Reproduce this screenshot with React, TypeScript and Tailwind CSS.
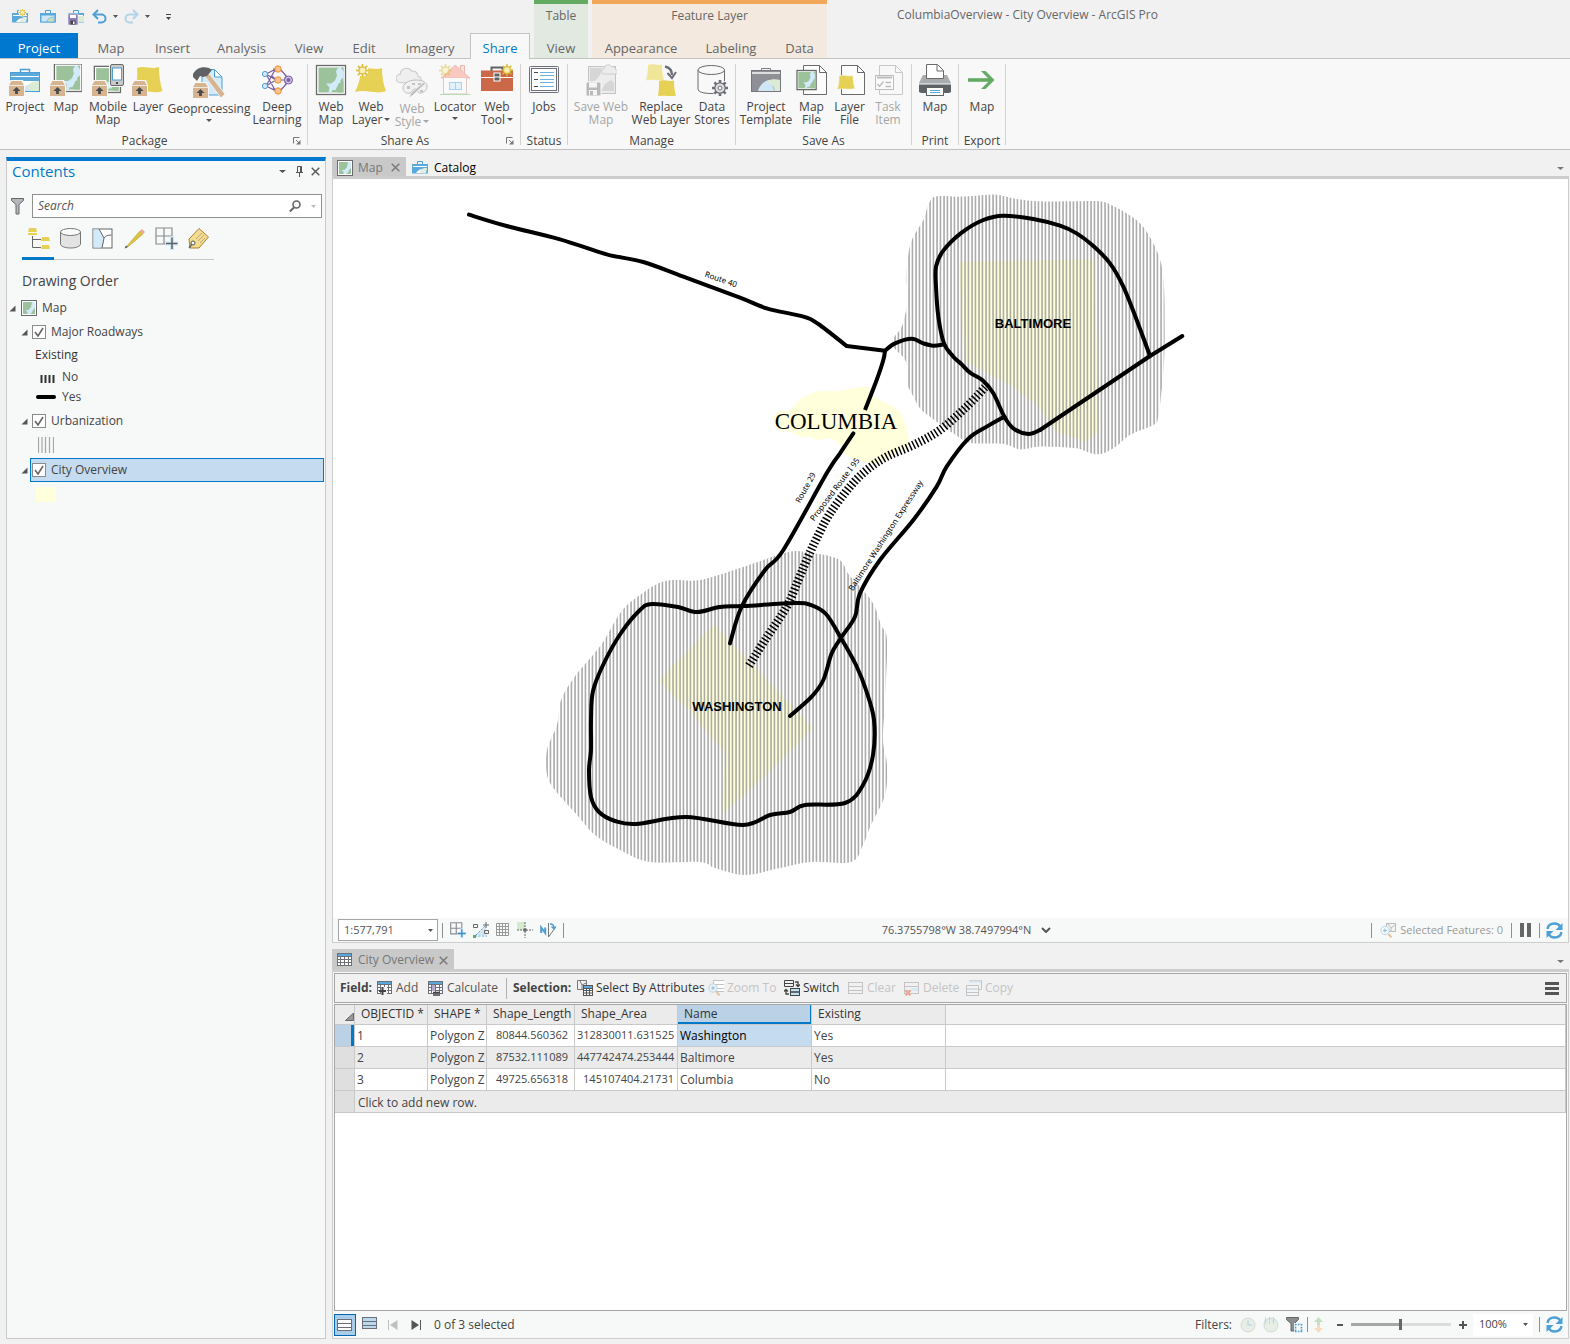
import React from "react";
import type { ReactNode } from "react";

type P = [number, number];

/* ---------- geometry helpers ---------- */

function smooth(pts: P[], closed = false): string {
  const n = pts.length;
  const at = (i: number): P =>
    closed ? pts[(i + n) % n] : pts[Math.max(0, Math.min(n - 1, i))];
  let d = `M${pts[0][0]} ${pts[0][1]}`;
  const last = closed ? n : n - 1;
  for (let i = 0; i < last; i++) {
    const [a, b, c, e] = [at(i - 1), at(i), at(i + 1), at(i + 2)];
    d += `C${b[0] + (c[0] - a[0]) / 6} ${b[1] + (c[1] - a[1]) / 6} ${c[0] - (e[0] - b[0]) / 6} ${c[1] - (e[1] - b[1]) / 6} ${c[0]} ${c[1]}`;
  }
  return closed ? d + "Z" : d;
}

/* ---------- icons ---------- */

function Svg({ s = 32, w, children }: { s?: number; w?: number; children: ReactNode }) {
  return (
    <svg width={w ?? s} height={s} viewBox={`0 0 ${w ?? s} ${s}`} fill="none" className="shrink-0" aria-hidden="true">
      {children}
    </svg>
  );
}

const Sun = ({ x, y, k = 1 }: { x: number; y: number; k?: number }) => (
  <g transform={`translate(${x} ${y}) scale(${k})`}>
    <path d="M0-6.500V6.500M-6.500 0H6.500M-4.600-4.600L4.600 4.600M4.600-4.600L-4.600 4.600" stroke="#d9bb3a" strokeWidth="1.500" />
    <circle r="3.600" fill="#f8efb0" stroke="#d9bb3a" strokeWidth="1.200" />
  </g>
);

const Box = () => (
  <g>
    <path d="M1.500 16h12.500l2 5V32.500H-1V21z" fill="#f8f8f8" />
    <path d="M2.500 17h10l2.500 4.200H0z" fill="#d6b48f" />
    <rect x="0" y="22" width="15" height="10" fill="#d6b48f" />
    <path d="M7.500 23l-4 4h2.600v3h2.800v-3h2.600z" fill="#4a4a4a" />
  </g>
);

const MapTile = ({ x = 0, y = 0, k = 1 }: { x?: number; y?: number; k?: number }) => (
  <g transform={`translate(${x} ${y}) scale(${k})`}>
    <rect x="1.500" y="1.500" width="29" height="29" fill="#fff" stroke="#6a6a6a" strokeWidth={1.3 / k} />
    <rect x="3.500" y="3.500" width="25" height="25" fill="#9bc29b" />
    <path d="M23 3.500h5.500v10l-3 2.500v5l-3 1-2 4h-3l-1 2.500h-3l1-5-3.500-4h5l4-3 2-5-1-4z" fill="#d3eaf9" />
    <path d="M26 3.500l2.500 4v-4zM23 20l5.500-3v11.500h-6z" fill="#9bc29b" />
  </g>
);

const IProject = () => (
  <Svg>
    <path d="M11.500 8V5.500h9V8" stroke="#4d9fd6" strokeWidth="1.400" />
    <rect x="1.500" y="8.500" width="29" height="19" fill="#fff" stroke="#4d9fd6" />
    <rect x="2" y="9" width="28" height="8" fill="#5aa9dd" />
    <path d="M2 12.500h28" stroke="#fff" />
    <path d="M17 27c0-6 5-10 13-10v10z" fill="#dcebd6" />
    <path d="M12 27c2-3 5-6 9-7l-3 3 3 4z" fill="#cfe6f7" />
    <Box />
  </Svg>
);

const IMap = () => (
  <Svg>
    <MapTile x={3} y={-1.500} k={0.95} />
    <Box />
  </Svg>
);

const IMobile = () => (
  <Svg>
    <MapTile x={1} y={1} k={0.9} />
    <rect x="17" y="0" width="15" height="23" fill="#f8f8f8" />
    <rect x="18.500" y=".5" width="13" height="21" rx="1.500" fill="#c9c9c9" stroke="#6a6a6a" />
    <rect x="20.500" y="4" width="9" height="12" fill="#fff" stroke="#4d9fd6" />
    <rect x="24" y="18" width="2" height="2" fill="#4a4a4a" />
    <Box />
  </Svg>
);

const ILayer = () => (
  <Svg>
    <path d="M5 4c8-3 14 2 22-1 0 8 1 16 3.500 24-9 4-18-3-29 1C5 20 6 12 5 4z" fill="#e6d155" />
    <Box />
  </Svg>
);

const IGeo = () => (
  <Svg>
    <path d="M9 3.500h12l8 8V29H9z" fill="#d3eaf9" stroke="#4d9fd6" />
    <path d="M21.500 3.500v7.500H29z" fill="#fff" stroke="#4d9fd6" />
    <path d="M11 9l4-3 17 22-4 4z" fill="#d6b48f" stroke="#f8f8f8" strokeWidth=".8" />
    <path d="M0 8c3-5 8-8 16-6l3 2-5 6-4 1-3-1-3 5-4-4z" fill="#5f6265" />
    <Box />
  </Svg>
);

const IDeep = () => (
  <Svg>
    <path d="M5 10l10-5M5 10l10 6M5 10l9 16M5 22l10-6M5 22l10 5M5 22L14 6M19 5l8 9M19 16h8M19 27l8-9M12 5h3v3M11 12l3 3M12 24l3 2M24 11l2 3-3 0M24 21l2-3-3 0" stroke="#7b5fa3" strokeWidth="1.200" />
    <circle cx="4" cy="10" r="2.600" fill="#d3eaf9" stroke="#4d9fd6" />
    <circle cx="4" cy="22" r="2.600" fill="#d3eaf9" stroke="#4d9fd6" />
    <circle cx="17" cy="5" r="3.200" fill="#f8c48c" stroke="#ef9235" />
    <circle cx="17" cy="16" r="3.200" fill="#f8c48c" stroke="#ef9235" />
    <circle cx="17" cy="27" r="3.200" fill="#f8c48c" stroke="#ef9235" />
    <circle cx="27.500" cy="16" r="4" fill="#cdbfe0" stroke="#7b5fa3" />
    <circle cx="27.500" cy="16" r="2" fill="#7b5fa3" />
  </Svg>
);

const IWebMap = () => (
  <Svg>
    <MapTile />
  </Svg>
);

const IWebLayer = () => (
  <Svg>
    <path d="M5 5c8-3 14 2 22-1 0 8 1 16 4 23-10 4-19-2-31 1C4 20 6 12 5 5z" fill="#e6d155" />
    <circle cx="7.500" cy="6.500" r="6" fill="#f8f8f8" />
    <Sun x={7.5} y={6.5} />
  </Svg>
);

const cloud = "M4 14a4 4 0 0 1 0-8 6 6 0 0 1 11-3 5 5 0 0 1 6 5 3 3 0 0 1 0 6z";

const IWebStyle = () => (
  <Svg>
    <path d={cloud} transform="translate(0 2) scale(1.050)" fill="#efefef" stroke="#c8c8c8" />
    <path d="M20 14c-8 0-13 4-13 8s4 6 7 5 2-4 5-4 2 5 6 4 6-3 6-7-5-6-11-6z" fill="#f1f1f1" stroke="#bdbdbd" />
    <path d="M11 20h3v3h-3zM16 17h3v2h-3zM22 17h3v2h-3zM24 24h3v2h-3z" fill="#c4c4c4" />
    <path d="M30 17L17 29l-4 3 2-5 13-11z" fill="#bdbdbd" stroke="#f8f8f8" strokeWidth=".6" />
  </Svg>
);

const ILocator = () => (
  <Svg>
    <path d="M21.500 9V1.500h4V12" fill="#fbe0da" stroke="#eab5ab" />
    <path d="M2 14L16 1l15 13z" fill="#f7c9c0" stroke="#f0bfb5" />
    <path d="M4.500 14v16h23V14" fill="#fafafa" stroke="#dfc9c4" />
    <rect x="10.500" y="18.500" width="12" height="7" fill="#e3f1fb" stroke="#a9d0ec" />
    <path d="M16.500 18.500v7" stroke="#a9d0ec" />
    <path d="M1 30.500h30.500" stroke="#b6dcb4" />
    <g opacity=".5">
      <Sun x={6.5} y={6.5} />
    </g>
  </Svg>
);

const IWebTool = () => (
  <Svg>
    <path d="M10.500 8V3.500h11V8" stroke="#5f6265" strokeWidth="2" />
    <rect x="0" y="6.500" width="32" height="20.500" fill="#cb6848" />
    <path d="M0 13.500h32" stroke="#fff" />
    <rect x="13" y="9" width="6" height="8" fill="#5f6265" stroke="#fff" />
    <path d="M13 13h6" stroke="#fff" />
    <Sun x={26} y={6} k={0.95} />
  </Svg>
);

const IJobs = () => (
  <Svg>
    <rect x="1.500" y="2.500" width="29" height="26" rx="1" fill="#f8f8f8" stroke="#6d6f78" />
    <rect x="3.500" y="4.500" width="25" height="22" fill="#fff" stroke="#6d6f78" />
    <path d="M6 8.500h4M6 15.500h4M6 22.500h4" stroke="#4a4a4a" />
    <path d="M12 8.500h14M12 11.500h14M12 15.500h14M12 18.500h14M12 22.500h14" stroke="#6fb2e2" />
  </Svg>
);

const ISaveWeb = () => (
  <Svg>
    <rect x="3.500" y="2.500" width="27" height="27" fill="#ececec" stroke="#c4c4c4" />
    <path d="M5 4h12l-2 7-5 6-5 1zM20 20l6-4 3 3v8H16z" fill="#d6d6d6" />
    <path d={cloud} transform="translate(16.500 .5) scale(.68)" fill="#ececec" stroke="#c0c0c0" />
    <rect x="1" y="18" width="15" height="14" fill="#b9b9b9" stroke="#f8f8f8" />
    <rect x="4" y="18.500" width="8" height="5" fill="#f5f5f5" />
    <rect x="4" y="26" width="8" height="5" fill="#f5f5f5" />
    <rect x="5" y="27" width="3" height="4" fill="#b9b9b9" />
  </Svg>
);

const IReplace = () => (
  <Svg>
    <path d="M3 1c5-2 9 1 14-.5 0 6 .5 11 2 15-6 2-12-1-18 1C2.500 11 3 6 3 1z" fill="#f0e69a" />
    <path d="M14 17c5-2 9 1 15-.5 0 6 .5 10 2 15-6 2-12-1-18 1 1-5 1-10 1-15.500z" fill="#e6d155" />
    <path d="M20 2.500c4 1 7 4 7 8.500" stroke="#6d6f78" strokeWidth="2.400" />
    <path d="M22.500 9l4.500 5 4-6" stroke="#6d6f78" strokeWidth="2" />
  </Svg>
);

const IStores = () => (
  <Svg>
    <path d="M2 6v19c0 3 6 4.500 13 4.500S28.500 28 28.500 25V6" fill="#f8f8f8" stroke="#6a6a6a" />
    <ellipse cx="15.250" cy="6" rx="13.300" ry="4.500" fill="#f8f8f8" stroke="#6a6a6a" />
    <circle cx="24" cy="24" r="8.500" fill="#f8f8f8" />
    <g transform="translate(24 24)">
      <path d="M0-8V8M-8 0H8M-5.600-5.600L5.600 5.600M5.600-5.600L-5.600 5.600" stroke="#6d6f78" strokeWidth="2.600" />
      <circle r="5.200" fill="#e0e0e0" stroke="#6d6f78" strokeWidth="1.300" />
      <circle r="2" fill="#f8f8f8" stroke="#6d6f78" />
    </g>
  </Svg>
);

const ITemplate = () => (
  <Svg>
    <path d="M11.500 7V4.500h9V7" stroke="#7b7b80" />
    <rect x="1.500" y="6.500" width="29" height="21" fill="#8f9096" stroke="#77787d" />
    <path d="M2 9h28" stroke="#f8f8f8" strokeWidth="1.500" />
    <path d="M8 27c2-7 7-10 11-11 4 3 3 7 6 11z" fill="#cfe6f7" />
    <path d="M17 17c4-2 9-2 13-1v11h-5c-1-4-3-7-8-10z" fill="#dcebd6" />
  </Svg>
);

const doc = "M7.500 1.500h16l7 7v22h-23z";
const fold = "M23.500 1.500v7h7";

const IMapFile = () => (
  <Svg>
    <path d={doc} fill="#fcfcfc" stroke="#6a6a6a" />
    <path d={fold} stroke="#6a6a6a" />
    <MapTile x={0} y={5.5} k={0.66} />
  </Svg>
);

const ILayerFile = () => (
  <Svg>
    <path d={doc} fill="#fcfcfc" stroke="#6a6a6a" />
    <path d={fold} stroke="#6a6a6a" />
    <path d="M5 12c5-2 9 1 14-.5 0 5 .5 9 2 13-6 2-12-1-18 1 2-4 2-8 2-13.500z" fill="#e6d155" stroke="#f8f8f8" strokeWidth=".5" />
  </Svg>
);

const ITask = () => (
  <Svg>
    <path d={doc} fill="#f8f8f8" stroke="#c8c8c8" />
    <path d={fold} stroke="#c8c8c8" />
    <rect x="3.500" y="11.500" width="18" height="14" fill="#fafafa" stroke="#bdbdbd" />
    <path d="M5 13.500h15" stroke="#bdbdbd" strokeWidth="2" />
    <path d="M5.500 20l2 2.500 4-5M13.500 18.500h5.500M13.500 22.500h5.500" stroke="#bdbdbd" strokeWidth="1.400" />
  </Svg>
);

const IPrint = () => (
  <Svg>
    <path d="M4 11h24l4 8v9H0v-9z" fill="#a9abaf" />
    <path d="M0 20h32v8l-2 1H2l-2-1z" fill="#5f6265" />
    <path d="M0 20h32" stroke="#f8f8f8" />
    <path d="M7.500.5h11l6 6v8h-17z" fill="#fff" stroke="#6a6a6a" />
    <path d="M18 .5v6.500h6.500" stroke="#6a6a6a" />
    <rect x="7.500" y="23.500" width="17" height="8" fill="#fff" stroke="#5f6265" />
    <path d="M11 26.500h10M11 28.500h10" stroke="#5aa9dd" />
  </Svg>
);

const IExport = () => (
  <Svg>
    <path d="M2 16h24" stroke="#63aa63" strokeWidth="3.600" />
    <path d="M15 7h4.500l9 9-9 9H15l9-9z" fill="#63aa63" />
  </Svg>
);

const SmallCase = ({ children }: { children?: ReactNode }) => (
  <Svg s={16}>
    <path d="M5.500 4V1.500h5V4" stroke="#4d9fd6" />
    <path d="M0 4h16v9.500H0z" fill="#5aa9dd" />
    <path d="M1 6.500h14" stroke="#fff" />
    <path d="M7 13c0-3 3-5 8-5l-1 5z" fill="#e3efdc" />
    <path d="M4 13c1-2 3-3 5-4l-1 4z" fill="#fff" />
    {children}
  </Svg>
);

const Caret = ({ c = "#555", w = 5 }: { c?: string; w?: number }) => (
  <svg width={w} height="3" viewBox="0 0 6 3" preserveAspectRatio="none" className="shrink-0" aria-hidden="true">
    <path d="M0 0h6L3 3z" fill={c} />
  </svg>
);

const SmallMap = () => (
  <svg width="16" height="16" viewBox="0 0 32 32" fill="none" className="shrink-0" aria-hidden="true">
    <rect x="1" y="1" width="30" height="30" fill="#fff" stroke="#6a6a6a" strokeWidth="2" />
    <rect x="4" y="4" width="24" height="24" fill="#9bc29b" />
    <path d="M22 4h6v12l-4 4-2 5-4 3h-5v-4l-4-4h6l5-6z" fill="#d3eaf9" />
  </svg>
);

const XIcon = ({ c = "#777" }: { c?: string }) => (
  <Svg s={9}>
    <path d="M.7.7l7.600 7.600M8.300.7L.7 8.300" stroke={c} strokeWidth="1.400" />
  </Svg>
);

const TableGlyph = ({ children }: { children?: ReactNode }) => (
  <Svg s={16}>
    <rect x=".5" y="1.500" width="14" height="12" fill="#fff" stroke="#6d6f78" />
    <rect x="1" y="2" width="13" height="2" fill="#5aa9dd" />
    <path d="M0 4.500h15M0 7.500h15M0 10.500h15M3.500 4v9.500M7.500 4v9.500M11.500 4v9.500" stroke="#6d6f78" />
    {children}
  </Svg>
);

const Refresh = () => (
  <Svg s={17}>
    <path d="M1.500 7C2 3.500 5 1.500 8.500 1.500c2.500 0 4.500 1 5.500 3" stroke="#4d9fd6" strokeWidth="2.400" />
    <path d="M16.500 1v7h-7z" fill="#4d9fd6" />
    <path d="M15.500 10c-.5 3.500-3.500 5.500-7 5.500-2.500 0-4.500-1-5.500-3" stroke="#4d9fd6" strokeWidth="2.400" />
    <path d="M.5 16V9h7z" fill="#4d9fd6" />
  </Svg>
);

const GridPlus = ({ s = 16 }: { s?: number }) => (
  <svg width={s} height={s} viewBox="0 0 23 23" fill="none" className="shrink-0" aria-hidden="true">
    <path d="M1 1h16v16H1zM9 1v16M1 9h16" stroke="#8a8a8e" strokeWidth={s > 16 ? 1.2 : 1.6} />
    <path d="M17 9v14M10 16.500h13" stroke="#cfe8f9" strokeWidth="4" />
    <path d="M17 10.500v11.500M11 16.500h11.500" stroke={s > 16 ? "#5f6265" : "#3d8fc9"} strokeWidth={s > 16 ? 1.5 : 2} />
  </svg>
);

/* ---------- title bar and ribbon tabs ---------- */

const mainTabs: [string, string][] = [
  ["Map", "ml-0.5 w-[62px]"],
  ["Insert", "w-[61px]"],
  ["Analysis", "w-[77px]"],
  ["View", "w-[58px]"],
  ["Edit", "w-[52px]"],
  ["Imagery", "w-[80px]"],
];

function Tab({ label, width }: { label: string; width: string }) {
  return <button className={`${width} h-[25px] pt-1 text-center text-[13px] leading-5 whitespace-nowrap text-[#666]`}>{label}</button>;
}

function Header() {
  return (
    <header className="flex h-[59px] shrink-0 border-b border-[#c3c3c3]">
      <div className="flex w-[530px] shrink-0 flex-col justify-between">
        <div className="flex h-[33px] items-center pl-3">
          <button aria-label="New project" className="mr-3">
            <SmallCase>
              <circle cx="10.500" cy="3.500" r="4" fill="#f1f1f1" />
              <Sun x={10.5} y={3.5} k={0.6} />
            </SmallCase>
          </button>
          <button aria-label="Open project" className="mr-3">
            <SmallCase>
              <path d="M1 6h14v7H1z" fill="#cfe6f7" stroke="#5aa9dd" />
              <path d="M7 13c0-3 3-5 8-5l-2 5z" fill="#c9dfbd" stroke="#5aa9dd" strokeWidth=".6" />
            </SmallCase>
          </button>
          <button aria-label="Save project" className="mr-2">
            <SmallCase>
              <path d="M6 7h10v6H6z" fill="#dcebd6" />
              <rect x="0" y="5" width="10" height="11" fill="#8f7bb8" stroke="#f1f1f1" strokeWidth=".6" />
              <rect x="2" y="6" width="6" height="3" fill="#fff" />
              <rect x="2.500" y="11.500" width="5" height="4" fill="#444" />
              <rect x="5" y="12.500" width="1.500" height="2.500" fill="#fff" />
            </SmallCase>
          </button>
          <button aria-label="Undo" className="flex items-center gap-1.5">
            <Svg s={15}>
              <path d="M1.500 5.500h8a4 4 0 0 1 0 8H6" stroke="#4d9fd6" strokeWidth="2" />
              <path d="M6 1L1.500 5.500 6 10" stroke="#4d9fd6" strokeWidth="2" />
            </Svg>
            <Caret />
          </button>
          <button aria-label="Redo" className="ml-1.5 flex items-center gap-1.5">
            <Svg s={15}>
              <path d="M13.500 5.500h-8a4 4 0 0 0 0 8H9" stroke="#b3d3ea" strokeWidth="2" />
              <path d="M9 1l4.500 4.500L9 10" stroke="#b3d3ea" strokeWidth="2" />
            </Svg>
            <Caret />
          </button>
          <button aria-label="Customize quick access toolbar" className="ml-4 flex flex-col items-center gap-0.5">
            <span className="h-px w-[5px] bg-[#444]" />
            <Caret c="#444" />
          </button>
        </div>
        <nav className="flex">
          <button className="h-[25px] w-[78px] bg-[#0078d0] pt-1 text-[13px] leading-5 text-white">Project</button>
          {mainTabs.map(([l, w]) => (
            <Tab key={l} label={l} width={w} />
          ))}
          <button className="-mb-px h-[26px] w-[60px] border border-b-0 border-[#c3c3c3] bg-[#f8f8f8] pt-[3px] text-[13px] leading-5 text-[#0079c9]">
            Share
          </button>
        </nav>
      </div>
      <div className="ml-1 flex w-[54px] shrink-0 flex-col items-center justify-between border-t-4 border-[#63aa63] bg-[#e2e9e0]">
        <span className="pt-1 text-[12px] leading-4 text-[#666]">Table</span>
        <Tab label="View" width="w-[54px]" />
      </div>
      <div className="ml-1 flex w-[235px] shrink-0 flex-col items-center justify-between border-t-4 border-[#f0a858] bg-[#f3e9de]">
        <span className="pt-1 text-[12px] leading-4 text-[#666]">Feature Layer</span>
        <div className="flex">
          <Tab label="Appearance" width="w-[98px]" />
          <Tab label="Labeling" width="w-[82px]" />
          <Tab label="Data" width="w-[55px]" />
        </div>
      </div>
      <h1 className="pt-[7px] pl-[70px] text-[12px] leading-4 whitespace-nowrap text-[#666]">
        ColumbiaOverview - City Overview - ArcGIS Pro
      </h1>
    </header>
  );
}

/* ---------- ribbon ---------- */

type Tool = { icon: () => ReactNode; lines: string[]; w: string; caret?: "inline" | "below"; off?: boolean; low?: boolean };
type Group = { label: string; width: string; pad?: string; launcher?: boolean; tools: Tool[] };

const groups: Group[] = [
  {
    label: "Package",
    width: "w-[308px]",
    pad: "pl-[3px]",
    launcher: true,
    tools: [
      { icon: IProject, lines: ["Project"], w: "w-[44px]" },
      { icon: IMap, lines: ["Map"], w: "w-[38px]" },
      { icon: IMobile, lines: ["Mobile", "Map"], w: "w-[46px]" },
      { icon: ILayer, lines: ["Layer"], w: "w-[34px]" },
      { icon: IGeo, lines: ["Geoprocessing"], w: "w-[88px]", caret: "below", low: true },
      { icon: IDeep, lines: ["Deep", "Learning"], w: "w-[48px]" },
    ],
  },
  {
    label: "Share As",
    width: "w-[213px]",
    pad: "pl-[2px]",
    launcher: true,
    tools: [
      { icon: IWebMap, lines: ["Web", "Map"], w: "w-[42px]" },
      { icon: IWebLayer, lines: ["Web", "Layer"], w: "w-[38px]", caret: "inline" },
      { icon: IWebStyle, lines: ["Web", "Style"], w: "w-[44px]", caret: "inline", off: true, low: true },
      { icon: ILocator, lines: ["Locator"], w: "w-[42px]", caret: "below" },
      { icon: IWebTool, lines: ["Web", "Tool"], w: "w-[42px]", caret: "inline" },
    ],
  },
  { label: "Status", width: "w-[47px]", tools: [{ icon: IJobs, lines: ["Jobs"], w: "w-[46px]" }] },
  {
    label: "Manage",
    width: "w-[168px]",
    pad: "pl-[4px]",
    tools: [
      { icon: ISaveWeb, lines: ["Save Web", "Map"], w: "w-[58px]", off: true },
      { icon: IReplace, lines: ["Replace", "Web Layer"], w: "w-[62px]" },
      { icon: IStores, lines: ["Data", "Stores"], w: "w-[40px]" },
    ],
  },
  {
    label: "Save As",
    width: "w-[176px]",
    pad: "pl-[4px]",
    tools: [
      { icon: ITemplate, lines: ["Project", "Template"], w: "w-[52px]" },
      { icon: IMapFile, lines: ["Map", "File"], w: "w-[39px]" },
      { icon: ILayerFile, lines: ["Layer", "File"], w: "w-[37px]" },
      { icon: ITask, lines: ["Task", "Item"], w: "w-[40px]", off: true },
    ],
  },
  { label: "Print", width: "w-[47px]", tools: [{ icon: IPrint, lines: ["Map"], w: "w-[46px]" }] },
  { label: "Export", width: "w-[47px]", tools: [{ icon: IExport, lines: ["Map"], w: "w-[46px]" }] },
];

function Ribbon() {
  return (
    <section aria-label="Share tools" className="flex h-[91px] shrink-0 border-b border-[#c0c0c0] bg-[#f8f8f8] pt-[5px] pb-1">
      {groups.map((g) => (
        <div key={g.label} className={`${g.width} flex shrink-0 flex-col justify-between border-r border-[#d2d2d2]`}>
          <div className={`${g.pad ?? ""} flex`}>
            {g.tools.map((t) => (
              <button
                key={t.lines.join(" ")}
                disabled={t.off}
                className={`${t.w} ${t.low ? "pt-0.5" : ""} ${t.off ? "text-[#a6a6a6]" : "text-[#444]"} flex flex-col items-center text-[12px] leading-[13px] whitespace-nowrap`}
              >
                {t.icon()}
                <span className="mt-1">{t.lines[0]}</span>
                {t.lines[1] && (
                  <span className="flex items-center gap-0.5">
                    {t.lines[1]}
                    {t.caret === "inline" && <Caret c={t.off ? "#a6a6a6" : "#555"} w={6} />}
                  </span>
                )}
                {t.caret === "below" && (
                  <span className="flex h-2.5 items-center">
                    <Caret w={6} />
                  </span>
                )}
              </button>
            ))}
          </div>
          <div className="flex h-2 items-center text-[12px] leading-4 text-[#444]">
            <span className="flex-1 text-center">{g.label}</span>
            {g.launcher && (
              <button aria-label={`${g.label} options`} className="mr-1.5 ml-1">
                <Svg s={8}>
                  <path d="M.5 6.500v-6h6M3 3l3 3" stroke="#777" />
                  <path d="M7.500 3v4.500H3z" fill="#777" />
                </Svg>
              </button>
            )}
          </div>
        </div>
      ))}
    </section>
  );
}

/* ---------- contents pane ---------- */

const Twisty = ({ label }: { label: string }) => (
  <button aria-label={`Collapse ${label}`} className="shrink-0">
    <Svg s={7}>
      <path d="M6.500.5v6h-6z" fill="#555" />
    </Svg>
  </button>
);

function LayerCheck({ id, label }: { id: string; label: string }) {
  return (
    <>
      <span className="grid size-[14px] shrink-0 place-items-center">
        <input
          id={id}
          type="checkbox"
          defaultChecked
          className="col-start-1 row-start-1 size-[14px] appearance-none border border-[#8a8a8a] bg-white"
        />
        <svg width="10" height="10" viewBox="0 0 10 10" fill="none" className="pointer-events-none col-start-1 row-start-1">
          <path d="M1 5l3 4 5-8" stroke="#666" strokeWidth="1.600" />
        </svg>
      </span>
      <label htmlFor={id} className="ml-[5px]">
        {label}
      </label>
    </>
  );
}

function Contents() {
  return (
    <aside className="flex w-[320px] shrink-0 flex-col border border-t-4 border-[#c9c9c9] border-t-[#0078d0] bg-[#f7f9f8] text-[12px] text-[#444]">
      <div className="flex h-5 items-center pr-1 pl-[5px]">
        <h2 className="flex-1 text-[15px] leading-5 text-[#0079c9]">Contents</h2>
        <button aria-label="Pane menu">
          <Caret w={7} />
        </button>
        <button aria-label="Auto hide" className="mr-2 ml-2.5">
          <Svg s={11} w={7}>
            <path d="M1.500 6V.5h4V6M0 6.500h7M3.500 7v4M4.500 1v5" stroke="#555" />
          </Svg>
        </button>
        <button aria-label="Close pane" className="mr-px">
          <XIcon c="#555" />
        </button>
      </div>
      <div className="mt-[13px] flex items-center pr-[3px] pl-1">
        <Svg s={17} w={13}>
          <path d="M.5.5h12v2l-4.500 4V16H5V6.500l-4.500-4z" fill="#b5b7ba" stroke="#666" />
        </Svg>
        <div className="ml-2 flex h-6 flex-1 items-center border border-[#8f8f8f] bg-white px-[5px]">
          <input aria-label="Search" placeholder="Search" className="min-w-0 flex-1 text-[12px] italic outline-none placeholder:text-[#555]" />
          <Svg s={12}>
            <circle cx="7.500" cy="4.500" r="3.500" stroke="#666" strokeWidth="1.600" />
            <path d="M5 7.500L.8 11.500" stroke="#666" strokeWidth="2" />
          </Svg>
          <span className="ml-2.5">
            <Caret c="#bbb" />
          </span>
        </div>
      </div>
      <div className="mt-[9px] ml-[15px] flex h-[33px] w-[192px] border-b border-[#c9c9c9] *:flex *:w-8 *:justify-center">
        <button aria-label="List by drawing order" className="-mb-px border-b-[3px] border-[#0079c9]">
          <Svg s={23}>
            <path d="M2 1h7l1 4H1zM1 6h9v2H1zM15 10h7l1 4h-9zM15 18h7l1 4h-9z" fill="#e6d155" />
            <path d="M5.500 9v11.500H14M5.500 12.500H14" stroke="#666" />
          </Svg>
        </button>
        <button aria-label="List by data source">
          <Svg s={23}>
            <path d="M1.500 5v12c0 2 4 4 10 4s10-2 10-4V5" fill="#e3e3e3" stroke="#777" />
            <ellipse cx="11.500" cy="5" rx="10" ry="3.500" fill="#fafafa" stroke="#777" />
          </Svg>
        </button>
        <button aria-label="List by selection">
          <Svg s={23}>
            <rect x="2" y="2" width="19" height="19" fill="#fff" stroke="#666" />
            <path d="M2.500 2.500h6l5 9-2 9h-9z" fill="#d3eaf9" />
            <path d="M8 2l5 9-2 10M20.500 8c-4 0-6 1-7.500 3" stroke="#666" />
          </Svg>
        </button>
        <button aria-label="List by editing">
          <Svg s={23}>
            <path d="M3 20L17 4l3 3L6 19l-4 2z" fill="#dcc443" stroke="#b99f2b" strokeWidth=".6" />
            <path d="M17 4l2-2 3 3-2 2z" fill="#eba79a" />
            <path d="M1.500 21.500L3 18.500l2 1.500z" fill="#555" />
          </Svg>
        </button>
        <button aria-label="List by snapping">
          <GridPlus s={23} />
        </button>
        <button aria-label="List by labeling">
          <Svg s={23}>
            <path d="M2 12L12 1.500l9.500 8.500L12 21H3z" fill="#f2dd8d" stroke="#b07c3a" />
            <path d="M9 12l6-6M11 14l6-6M13 16l5-5" stroke="#b9a98a" />
            <circle cx="6" cy="16" r="2" fill="#fff" stroke="#555" />
            <path d="M5 17l-3 4" stroke="#666" strokeWidth="1.600" />
          </Svg>
        </button>
      </div>
      <h3 className="mt-[11px] ml-[15px] text-[14px] leading-5">Drawing Order</h3>
      <div className="mt-2 flex h-[18px] items-center pl-[2px]">
        <Twisty label="Map" />
        <span className="ml-[5px] flex items-center gap-[5px]">
          <SmallMap />
          Map
        </span>
      </div>
      <div className="mt-[5px] flex h-5 items-center pl-[14px]">
        <Twisty label="Major Roadways" />
        <span className="w-1" />
        <LayerCheck id="roads" label="Major Roadways" />
      </div>
      <div className="mt-[3px] ml-7 h-5 leading-5 text-[#333]">Existing</div>
      <div className="mt-[3px] flex h-[18px] items-center pl-[29px]">
        <svg width="20" height="8" viewBox="0 0 20 8" className="mt-1">
          <path d="M5.500 0v8M9.500 0v8M13.500 0v8M17.500 0v8" stroke="#333" strokeWidth="2" />
        </svg>
        <span className="ml-[6px]">No</span>
      </div>
      <div className="mt-[2px] flex h-[18px] items-center pl-[29px]">
        <span className="h-1 w-5 rounded-full bg-black" />
        <span className="ml-[6px]">Yes</span>
      </div>
      <div className="mt-[5px] flex h-5 items-center pl-[14px]">
        <Twisty label="Urbanization" />
        <span className="w-1" />
        <LayerCheck id="urban" label="Urbanization" />
      </div>
      <svg width="16" height="16" viewBox="0 0 16 16" className="mt-[6px] ml-[31px]">
        <path d="M.5 0v16M4 0v16M7.500 0v16M11.500 0v16M15.500 0v16" stroke="#a6a6a6" strokeWidth="1.200" />
      </svg>
      <div className="mt-[5px] flex h-6 items-center pr-px pl-[14px]">
        <Twisty label="City Overview" />
        <div className="ml-0.5 flex h-6 flex-1 items-center border border-[#0079c9] bg-[#c5dbef] pl-px">
          <LayerCheck id="city" label="City Overview" />
        </div>
      </div>
      <div className="mt-[5px] ml-[29px] h-[15px] w-5 bg-[#ffffdc]" />
    </aside>
  );
}

/* ---------- map ---------- */

const baltimoreUrban: P[] = [
  [585, 50], [650, 50], [700, 48], [770, 44], [830, 57], [900, 64], [1000, 64], [1080, 64], [1120, 78], [1160, 100], [1200, 130],
  [1235, 180], [1262, 245], [1272, 320], [1274, 450], [1272, 550], [1264, 640], [1254, 715], [1240, 735], [1170, 765],
  [1130, 798], [1095, 818], [1060, 822], [1010, 805], [930, 800], [890, 800], [840, 808], [790, 792], [690, 788],
  [640, 760], [570, 710], [540, 685], [515, 640], [502, 610], [498, 545], [460, 500], [460, 475], [485, 440], [500, 380],
  [502, 330], [498, 290], [512, 190], [550, 120], [565, 75],
];
const baltimoreCity = "M657 245L1063 238L1075 700L1078 755L1035 785L950 755L890 675L820 620L760 590L680 545L672 530L665 420Z";
const columbiaCity: P[] = [
  [100, 720], [115, 695], [150, 690], [185, 655], [230, 635], [300, 632], [340, 625], [385, 620], [410, 655], [450, 675],
  [485, 705], [505, 790], [450, 830], [410, 850], [370, 845], [320, 825], [300, 795], [270, 775], [230, 780], [210, 770],
  [180, 770], [150, 755], [115, 750],
];
const baltimoreRing: P[] = [
  [1230, 528], [1190, 420], [1150, 320], [1110, 250], [1060, 198], [1010, 160], [960, 137], [880, 117], [790, 107], [730, 120],
  [665, 158], [610, 212], [588, 260], [588, 320], [595, 410], [612, 490], [640, 530], [665, 553], [690, 578], [730, 603],
  [760, 640], [793, 710], [820, 745], [865, 762], [900, 750],
];
const route40: P[] = [
  [-813, 104], [-700, 138], [-540, 178], [-400, 223], [-290, 246], [-170, 290], [0, 353], [80, 385], [190, 410], [235, 432],
  [320, 498],
];
const connector: P[] = [[435, 512], [465, 490], [515, 476], [550, 490], [580, 497], [612, 493]];
const route29a: P[] = [[435, 512], [430, 540], [410, 600], [375, 690]];
const route29b: P[] = [[340, 760], [300, 820], [260, 880], [130, 1110], [75, 1170], [5, 1280], [-30, 1390]];
const i95: P[] = [
  [735, 622], [680, 680], [600, 750], [520, 795], [440, 830], [380, 870], [330, 920], [270, 1000], [230, 1075], [200, 1140],
  [175, 1200], [140, 1280], [75, 1380], [25, 1460],
];
const expressway: P[] = [
  [793, 710], [740, 740], [683, 778], [620, 860], [590, 920], [520, 1020], [420, 1140], [360, 1240], [345, 1310], [302, 1375],
  [275, 1420], [250, 1500], [215, 1550], [150, 1608],
];
const washingtonUrban: P[] = [
  [740, 568], [785, 553], [805, 552], [838, 559], [849, 575], [863, 590], [874, 605], [881, 625], [887, 640], [885, 700],
  [883, 740], [887, 765], [885, 795], [871, 825], [863, 845], [851, 862], [811, 862], [780, 868], [745, 875], [715, 868],
  [700, 862], [650, 862], [620, 850], [595, 835], [577, 815], [555, 790], [547, 775], [547, 750], [557, 725], [561, 700],
  [576, 675], [601, 645], [621, 612], [640, 595], [665, 581], [700, 580],
];
const washingtonRing: P[] = [
  [744, 606], [720, 607], [697, 612], [678, 607], [652, 604], [640, 610], [621, 633], [604, 663], [593, 691], [591, 720],
  [591, 750], [589, 770], [591, 797], [599, 812], [615, 821], [636, 824], [686, 817], [743, 825], [770, 815], [790, 812], [805, 805],
  [845, 803], [863, 785], [873, 755], [874, 720], [866, 690], [856, 665], [841, 638], [826, 614], [811, 605], [795, 603],
];

function MapCanvas() {
  return (
    <svg className="min-h-0 w-full flex-1 bg-white" role="img" aria-label="Map of Baltimore, Columbia and Washington">
      <defs>
        <pattern id="hatch" width="3.500" height="10" patternUnits="userSpaceOnUse">
          <path d="M1 0v10" stroke="#8c8c8c" strokeWidth="1.200" />
        </pattern>
        <pattern id="hatch-large" width="10.500" height="30" patternUnits="userSpaceOnUse">
          <path d="M3 0v30" stroke="#8c8c8c" strokeWidth="3.600" />
        </pattern>
      </defs>
      <g transform="translate(-333 -179)" fill="none">
        <path d="M714 624L813 728L766 775L741 798L724 812L721 810L723 780L726 755L701 725L691 712L658 681Z" fill="#ffffdc" />
        <path d={smooth(washingtonUrban, true)} fill="url(#hatch)" />
        <path d={smooth(washingtonRing, true)} stroke="#000" strokeWidth="4" />
        <g transform="translate(740 180) scale(.333333)" strokeLinecap="round" strokeLinejoin="round">
          <path d={baltimoreCity} fill="#ffffdc" />
          <path d={smooth(columbiaCity, true)} fill="#ffffdc" />
          <path d={smooth(baltimoreUrban, true)} fill="url(#hatch-large)" />
          <path d={smooth(i95)} stroke="#000" strokeWidth="26" strokeDasharray="4.500 6.500" strokeLinecap="butt" />
          <g stroke="#000" strokeWidth="12">
            <path d={smooth(baltimoreRing)} />
            <path d="M900 750L1230 528L1327 468" />
            <path d={smooth(route40)} />
            <path d="M320 498L435 512" />
            <path d={smooth(connector)} />
            <path d={smooth(route29a)} strokeLinecap="butt" />
            <path d={smooth(route29b)} />
            <path d={smooth(expressway)} />
          </g>
        </g>
        <g fill="#000" textAnchor="middle">
          <text x="1033" y="328" className="font-['Liberation_Sans',Arial,sans-serif] text-[13px] font-bold">BALTIMORE</text>
          <text x="737" y="711" className="font-['Liberation_Sans',Arial,sans-serif] text-[13px] font-bold">WASHINGTON</text>
          <text x="836" y="429" className="font-['Liberation_Serif',serif] text-[23px]">COLUMBIA</text>
          <g className="font-['Noto_Sans',sans-serif] text-[8px]">
            <text transform="translate(720 282) rotate(19)">Route 40</text>
            <text transform="translate(808 489) rotate(-61)">Route 29</text>
            <text transform="translate(837 491) rotate(-53)">Proposed Route I 95</text>
            <text transform="translate(888 537) rotate(-57)">Baltimore Washington Expressway</text>
          </g>
        </g>
      </g>
    </svg>
  );
}

const Divider = () => <span className="h-[15px] w-px shrink-0 bg-[#8f8f8f]" />;

function MapPane() {
  return (
    <section aria-label="Map view" className="flex min-h-0 flex-1 flex-col text-[12px]">
      <div className="flex h-[22px] shrink-0 items-stretch border-b-[3px] border-[#cdcdcd]">
        <div className="flex w-[74px] items-center gap-[5px] bg-[#c9c9c9] pt-0.5 pl-[5px] text-[#777]">
          <SmallMap />
          <button>Map</button>
          <button aria-label="Close Map" className="ml-[3px]">
            <XIcon />
          </button>
        </div>
        <button className="ml-1.5 flex items-center gap-1.5 pt-0.5 text-black">
          <SmallCase />
          Catalog
        </button>
        <button aria-label="View list" className="mr-[5px] ml-auto pt-1">
          <Caret c="#777" w={7} />
        </button>
      </div>
      <div className="flex min-h-0 flex-1 flex-col border-x border-b border-[#cdcdcd]">
        <MapCanvas />
        <div className="flex h-6 shrink-0 items-center bg-[#f7f9f8] px-[5px] text-[#555]">
          <div className="flex flex-1 items-center">
            <span className="grid items-center">
              <select
                aria-label="Map scale"
                className="col-start-1 row-start-1 h-[22px] w-[100px] appearance-none border border-[#a6a6a6] bg-white pl-[5px] text-[11px]"
              >
                <option>1:577,791</option>
              </select>
              <span className="pointer-events-none col-start-1 row-start-1 mr-[5px] justify-self-end">
                <Caret />
              </span>
            </span>
            <span className="ml-1" />
            <Divider />
            <div className="ml-[7px] flex items-center gap-[7px]">
              <button aria-label="Snapping">
                <GridPlus />
              </button>
              <button aria-label="Dynamic constraints">
                <Svg s={16}>
                  <path d="M2 13L13 4v9z" fill="#cfe6f7" />
                  <path d="M3 13L12 4M2 14h12" stroke="#4d9fd6" strokeDasharray="2 1.500" />
                  <path d="M.5 2.500h4v3h-4zM11.500 8.500h4v3h-4zM10 3h6M13 0v6" stroke="#666" />
                  <rect x="0" y="13" width="3" height="3" fill="#63aa63" />
                </Svg>
              </button>
              <button aria-label="Grid">
                <Svg s={14}>
                  <path d="M.5.5h12v12H.5zM3.500 0v13M6.500 0v13M9.500 0v13M0 3.500h13M0 6.500h13M0 9.500h13" stroke="#999" />
                </Svg>
              </button>
              <button aria-label="Inference">
                <Svg s={16}>
                  <rect x="0" y="0" width="8" height="8" fill="#d5ead0" />
                  <path d="M8 0v16M0 8h16" stroke="#666" strokeDasharray="2 1" />
                  <rect x="6.500" y="6.500" width="3" height="3" fill="#666" />
                </Svg>
              </button>
              <button aria-label="North arrow">
                <Svg s={16}>
                  <path d="M1.200 11V5.500l4 5.500V5.500" stroke="#4d9fd6" strokeWidth="2" />
                  <path d="M8.500 1v14l6.500-9" stroke="#777" />
                  <path d="M10 2c3 0 4 1 4 4M11.500 4.500L14 7l2-2.500" stroke="#4d9fd6" strokeWidth="1.400" />
                </Svg>
              </button>
              <Divider />
            </div>
          </div>
          <button className="ml-8 flex items-center gap-2.5 text-[11px]">
            76.3755798°W 38.7497994°N
            <Svg s={6} w={10}>
              <path d="M1 1l4 4 4-4" stroke="#555" strokeWidth="2" />
            </Svg>
          </button>
          <div className="flex flex-1 items-center justify-end">
            <Divider />
            <span className="ml-2 flex items-center gap-1 text-[11px] text-[#999]">
              <Svg s={16}>
                <rect x="6.500" y="1.500" width="9" height="8" fill="#f4f4f4" stroke="#bbb" />
                <path d="M8 2l3 4v4M15 3l-4 3" stroke="#bbb" />
                <circle cx="5" cy="8.500" r="4.200" fill="#f7f9f8" stroke="#b5d3e8" />
                <path d="M5 6.500v4M3 8.500h4" stroke="#8bbbdc" />
                <path d="M8.500 12l3 3.500" stroke="#e2c4a4" strokeWidth="2" />
              </Svg>
              Selected Features: 0
            </span>
            <span className="ml-2" />
            <Divider />
            <button aria-label="Pause drawing" className="mx-2 flex gap-[3px]">
              <span className="h-[14px] w-1 bg-[#666]" />
              <span className="h-[14px] w-1 bg-[#666]" />
            </button>
            <Divider />
            <button aria-label="Refresh map" className="ml-1.5">
              <Refresh />
            </button>
          </div>
        </div>
      </div>
    </section>
  );
}

/* ---------- attribute table ---------- */

const rows = [
  ["1", "Polygon Z", "80844.560362", "312830011.631525", "Washington", "Yes"],
  ["2", "Polygon Z", "87532.111089", "447742474.253444", "Baltimore", "Yes"],
  ["3", "Polygon Z", "49725.656318", "145107404.21731", "Columbia", "No"],
];

const Lines = ({ off, x = 0, y = 2, fill = "#fff" }: { off?: boolean; x?: number; y?: number; fill?: string }) => (
  <g transform={`translate(${x} ${y})`} stroke={off ? "#c4c4c4" : "#6d6f78"}>
    <rect x=".5" y=".5" width="14" height="11" fill={fill} />
    <path d="M0 4.500h15M0 8.500h15" />
  </g>
);

function TableTool({ label, width, off, dark, children }: { label: string; width: string; off?: boolean; dark?: boolean; children: ReactNode }) {
  return (
    <button
      disabled={off}
      className={`${width} flex items-center gap-[3px] whitespace-nowrap ${off ? "text-[#c4c4c4]" : dark ? "text-[#333]" : "text-[#555]"}`}
    >
      {children}
      {label}
    </button>
  );
}

function TablePane() {
  return (
    <section aria-label="Attribute table" className="flex h-[390px] shrink-0 flex-col text-[12px] text-[#444]">
      <div className="flex h-[23px] shrink-0 items-stretch border-b-[3px] border-[#cdcdcd]">
        <div className="flex w-[122px] items-center gap-[5px] bg-[#c9c9c9] pt-0.5 pl-[5px] text-[#777]">
          <TableGlyph />
          <button className="whitespace-nowrap">City Overview</button>
          <button aria-label="Close City Overview">
            <XIcon />
          </button>
        </div>
        <button aria-label="Table list" className="mr-[5px] ml-auto pt-1">
          <Caret c="#777" w={7} />
        </button>
      </div>
      <div className="flex min-h-0 flex-1 flex-col border-x border-b border-[#cdcdcd] bg-[#f7f9f8]">
        <div className="mx-px mt-px flex h-[30px] shrink-0 items-center border border-[#a6a6a6] bg-[#f1f1f1] pl-[5px]">
          <span className="w-[37px] font-bold">Field:</span>
          <TableTool label="Add" width="w-[51px]">
            <TableGlyph>
              <path d="M4 7h6v9H4z" fill="#f1f1f1" />
              <path d="M5.500 7v8M2 11h7" stroke="#444" strokeWidth="2" />
            </TableGlyph>
          </TableTool>
          <TableTool label="Calculate" width="w-[78px]">
            <TableGlyph>
              <rect x="4" y="5" width="3" height="6" fill="#b9aacb" />
              <path d="M5 12.500h7M5 15h7" stroke="#444" strokeWidth="1.500" />
            </TableGlyph>
          </TableTool>
          <span className="mr-1.5 h-[21px] w-px bg-[#b0b0b0]" />
          <span className="w-16 font-bold">Selection:</span>
          <TableTool label="Select By Attributes" width="w-[131px]" dark>
            <Svg s={16}>
              <path d="M.5.5h9v9h-9zM3 1l2 4M9 3L5 5v4" stroke="#777" />
              <rect x="6.500" y="5.500" width="9" height="10" fill="#fff" stroke="#555" />
              <rect x="7" y="6" width="8" height="2" fill="#5aa9dd" />
              <path d="M6 8.500h10M6 10.500h10M6 13h10M9.500 8v7M12.500 8v7" stroke="#555" />
            </Svg>
          </TableTool>
          <TableTool label="Zoom To" width="w-[76px]" off>
            <Svg s={16}>
              <Lines off x={5} y={0} />
              <circle cx="5" cy="8" r="4.200" fill="#f1f1f1" stroke="#b5d3e8" />
              <path d="M5 6v4M3 8h4" stroke="#8bbbdc" />
              <path d="M8.500 12l3 3.500" stroke="#e2c4a4" strokeWidth="2" />
            </Svg>
          </TableTool>
          <TableTool label="Switch" width="w-[64px]" dark>
            <Svg s={16}>
              <path d="M.5.5h9v6h-9zM0 3.500h10" stroke="#444" />
              <rect x="6.500" y="8.500" width="9" height="7" fill="#bfe3f5" stroke="#444" />
              <path d="M6 12h10M11 2h3v4M12 4.500l2 2 2-2M5 14H2v-4M0 11.500l2-2 2 2" stroke="#444" strokeWidth="1.300" />
            </Svg>
          </TableTool>
          <TableTool label="Clear" width="w-[56px]" off>
            <Svg s={16}>
              <Lines off fill="#f1f1f1" />
            </Svg>
          </TableTool>
          <TableTool label="Delete" width="w-[62px]" off>
            <Svg s={16}>
              <Lines off fill="#f1f1f1" />
              <rect x="7" y="8" width="7" height="3" fill="#d3eaf9" />
              <path d="M1.500 10.500l5 5M6.500 10.500l-5 5" stroke="#eba796" strokeWidth="2" />
            </Svg>
          </TableTool>
          <TableTool label="Copy" width="w-[56px]" off>
            <Svg s={16}>
              <path d="M3.500.5h12v9h-3" stroke="#c4c4c4" />
              <path d="M3 1.500h12" stroke="#cfe6f7" strokeWidth="2" />
              <rect x=".5" y="5.500" width="12" height="10" fill="#eef6fb" stroke="#c4c4c4" />
              <path d="M0 9h13M0 12.500h13" stroke="#c4c4c4" />
            </Svg>
          </TableTool>
          <button aria-label="Table menu" className="mr-[7px] ml-auto flex flex-col gap-0.5">
            <span className="h-[3px] w-[14px] bg-[#555]" />
            <span className="h-[3px] w-[14px] bg-[#555]" />
            <span className="h-[3px] w-[14px] bg-[#555]" />
          </button>
        </div>
        <div className="mx-px mt-px min-h-0 flex-1 overflow-hidden border border-[#a6a6a6] bg-white">
          <table className="w-full table-fixed border-separate border-spacing-0 [&_td]:border-r [&_td]:border-b [&_td]:border-[#c9c9c9] [&_th]:border-r [&_th]:border-b [&_th]:border-[#c9c9c9]">
            <colgroup>
              <col className="w-5" />
              <col className="w-[73px]" />
              <col className="w-[59px]" />
              <col className="w-[88px]" />
              <col className="w-[103px]" />
              <col className="w-[134px]" />
              <col className="w-[134px]" />
              <col />
            </colgroup>
            <thead>
              <tr className="h-5 bg-[#ebebeb] text-left leading-[18px] whitespace-nowrap text-[#333] [&>th]:p-0 [&>th]:pb-px [&>th]:pl-1.5 [&>th]:font-normal">
                <th aria-label="Row selector">
                  <svg width="9" height="8" viewBox="0 0 9 8" className="mt-1.5 ml-1">
                    <path d="M8.500 0v7.500H.5z" fill="#999" stroke="#666" />
                  </svg>
                </th>
                <th>OBJECTID *</th>
                <th>SHAPE *</th>
                <th>Shape_Length</th>
                <th>Shape_Area</th>
                <th className="bg-[#bad1e6] shadow-[inset_0_-2px_0_#0079c9,inset_-1px_0_0_#0079c9]">Name</th>
                <th>Existing</th>
                <th className="bg-[#f2f2f2]" aria-label="Empty" />
              </tr>
            </thead>
            <tbody>
              {rows.map((r, i) => (
                <tr key={r[0]} className={`h-[22px] whitespace-nowrap [&>td]:px-0.5 [&>td]:py-0 ${i === 1 ? "bg-[#ebebeb]" : "bg-white"}`}>
                  <td className={i === 0 ? "bg-[#bad1e6] shadow-[inset_-3px_0_0_#0079c9]" : "bg-[#dfdfdf]"} />
                  <td>{r[0]}</td>
                  <td>{r[1]}</td>
                  <td className="text-right text-[11px]">
                    <span className="pr-1">{r[2]}</span>
                  </td>
                  <td className="text-right text-[11px]">
                    <span className="pr-px">{r[3]}</span>
                  </td>
                  <td className={i === 0 ? "bg-[#c5dbef] text-black" : ""}>{r[4]}</td>
                  <td>{r[5]}</td>
                  <td />
                </tr>
              ))}
              <tr className="h-[22px] bg-[#ebebeb]">
                <td className="bg-[#dfdfdf] p-0" />
                <td colSpan={7} className="pt-0.5 pb-0 pl-[3px]">
                  Click to add new row.
                </td>
              </tr>
            </tbody>
          </table>
        </div>
        <div className="flex h-[27px] shrink-0 items-center pr-[5px] pl-px">
          <button aria-label="Show all records" className="flex h-[22px] w-[22px] items-center justify-center border border-[#0067b0] bg-[#a9cce8]">
            <Svg s={16}>
              <Lines />
            </Svg>
          </button>
          <button aria-label="Show selected records" className="mb-1 ml-1.5">
            <Svg s={16}>
              <Lines fill="#bcd8ef" />
            </Svg>
          </button>
          <button aria-label="Previous record" disabled className="ml-[10px]">
            <Svg s={10}>
              <path d="M.5 0v10" stroke="#c0c0c0" />
              <path d="M9.500 0v10L2 5z" fill="#c0c0c0" />
            </Svg>
          </button>
          <button aria-label="Next record" className="ml-[13px]">
            <Svg s={10}>
              <path d="M9.500 0v10" stroke="#555" />
              <path d="M.5 0v10L8 5z" fill="#555" />
            </Svg>
          </button>
          <span className="ml-[13px]">0 of 3 selected</span>
          <span className="mr-2 ml-auto">Filters:</span>
          <div className="flex items-center gap-[7px]">
            <button aria-label="Filter by time" disabled>
              <Svg s={16}>
                <circle cx="8" cy="8" r="7" fill="#e6eee6" stroke="#d5d9d5" />
                <path d="M8 3.500V8h4" stroke="#c5d8e5" strokeWidth="1.500" />
              </Svg>
            </button>
            <button aria-label="Filter by range" disabled>
              <Svg s={16}>
                <circle cx="8" cy="8" r="7" fill="#e6eee6" stroke="#d5d9d5" />
                <path d="M2.500 0v7M6.500 0v7M10.500 0v7M1 4h3M5 2h3M9 4h3" stroke="#c5d8e5" />
              </Svg>
            </button>
            <button aria-label="Filter by extent">
              <Svg s={16} w={17}>
                <path d="M.5.5h12v2l-4 4V14H5V6.500l-4.500-4z" fill="#8a8c90" stroke="#666" />
                <rect x="8" y="6" width="9" height="9" fill="#f7f9f8" />
                <path d="M9 7.500h8M9 14.500h8M9.500 7v8M15.500 7v8" stroke="#4d9fd6" strokeWidth="1.600" strokeDasharray="1.600 1.200" />
              </Svg>
            </button>
          </div>
          <span className="ml-1" />
          <Divider />
          <button aria-label="Sync records" disabled className="ml-1.5">
            <Svg s={16} w={9}>
              <path d="M4.500 0L9 5H6v3H3V5H0z" fill="#c6dfc4" />
              <path d="M4.500 16L9 11H6V8H3v3H0z" fill="#f6dcc2" />
            </Svg>
          </button>
          <button aria-label="Zoom out" className="ml-3.5 h-0.5 w-1.5 bg-[#555]" />
          <input
            aria-label="Table zoom"
            type="range"
            defaultValue={49}
            className="mx-2 h-3 w-[100px] appearance-none bg-transparent [&::-webkit-slider-runnable-track]:h-[3px] [&::-webkit-slider-runnable-track]:bg-[linear-gradient(to_right,#a6a6a6_49%,#dcdcdc_49%)] [&::-webkit-slider-thumb]:-mt-1 [&::-webkit-slider-thumb]:h-[11px] [&::-webkit-slider-thumb]:w-[3px] [&::-webkit-slider-thumb]:appearance-none [&::-webkit-slider-thumb]:bg-[#666]"
          />
          <button aria-label="Zoom in">
            <Svg s={8}>
              <path d="M4 0v8M0 4h8" stroke="#555" strokeWidth="2" />
            </Svg>
          </button>
          <span className="ml-1.5 grid items-center">
            <select
              aria-label="Zoom level"
              className="col-start-1 row-start-1 h-[22px] w-[60px] appearance-none bg-white pl-1.5 text-[11px]"
            >
              <option>100%</option>
            </select>
            <span className="pointer-events-none col-start-1 row-start-1 mr-[5px] justify-self-end">
              <Caret />
            </span>
          </span>
          <span className="ml-1.5" />
          <Divider />
          <button aria-label="Refresh table" className="ml-1.5">
            <Refresh />
          </button>
        </div>
      </div>
    </section>
  );
}

export default function App() {
  return (
    <div className="flex h-screen flex-col overflow-hidden bg-[#f1f1f1] font-['Open_Sans','Noto_Sans',sans-serif] text-[#444]">
      <Header />
      <Ribbon />
      <main className="flex min-h-0 flex-1 gap-1.5 pt-[7px] pr-px pb-[5px] pl-1.5">
        <Contents />
        <div className="flex min-w-0 flex-1 flex-col gap-1.5">
          <MapPane />
          <TablePane />
        </div>
      </main>
    </div>
  );
}
